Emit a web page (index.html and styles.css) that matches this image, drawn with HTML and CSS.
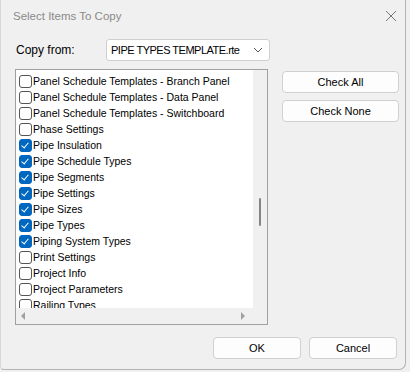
FILE: index.html
```html
<!DOCTYPE html>
<html>
<head>
<meta charset="utf-8">
<link rel="stylesheet" href="styles.css">
</head>
<body>
<div class="window">
  <div class="titlebar">
    <span class="title">Select Items To Copy</span>
    <svg class="close" width="12" height="12" viewBox="0 0 12 12"><path d="M1 1L11 11M11 1L1 11" stroke="#777" stroke-width="1"/></svg>
  </div>
  <div class="content">
    <div class="from-row">
      <span class="from-label">Copy from:</span>
      <div class="combo">
        <span>PIPE TYPES TEMPLATE.rte</span>
        <svg width="10" height="6" viewBox="0 0 10 6"><path d="M1 1L5 5L9 1" fill="none" stroke="#555" stroke-width="1"/></svg>
      </div>
    </div>
    <div class="main-row">
      <div class="listbox">
        <div class="items">
          <div class="item"><span class="cb"></span>Panel Schedule Templates - Branch Panel</div>
          <div class="item"><span class="cb"></span>Panel Schedule Templates - Data Panel</div>
          <div class="item"><span class="cb"></span>Panel Schedule Templates - Switchboard</div>
          <div class="item"><span class="cb"></span>Phase Settings</div>
          <div class="item"><span class="cb on"></span>Pipe Insulation</div>
          <div class="item"><span class="cb on"></span>Pipe Schedule Types</div>
          <div class="item"><span class="cb on"></span>Pipe Segments</div>
          <div class="item"><span class="cb on"></span>Pipe Settings</div>
          <div class="item"><span class="cb on"></span>Pipe Sizes</div>
          <div class="item"><span class="cb on"></span>Pipe Types</div>
          <div class="item"><span class="cb on"></span>Piping System Types</div>
          <div class="item"><span class="cb"></span>Print Settings</div>
          <div class="item"><span class="cb"></span>Project Info</div>
          <div class="item"><span class="cb"></span>Project Parameters</div>
          <div class="item"><span class="cb"></span>Railing Types</div>
        </div>
        <div class="vscroll"><div class="vthumb"></div></div>
        <div class="hscroll">
          <span class="arr left"></span>
          <span class="arr right"></span>
        </div>
        <div class="corner"></div>
      </div>
      <div class="side">
        <button class="btn">Check All</button>
        <button class="btn">Check None</button>
      </div>
    </div>
    <div class="bottom-row">
      <button class="btn small">OK</button>
      <button class="btn small">Cancel</button>
    </div>
  </div>
</div>
</body>
</html>
```
FILE: styles.css
```css
html, body {
  margin: 0;
  padding: 0;
  background: #f0f0f0;
}
body {
  font-family: "Liberation Sans", Arial, sans-serif;
  font-size: 12px;
  color: #000;
}
.window {
  width: 406px;
  height: 370px;
  box-sizing: border-box;
  background: #f0f0f0;
  border-right: 1px solid #b4b4b4;
  border-bottom: 1px solid #b4b4b4;
  border-left: 1px solid #d8d8d8;
  border-bottom-right-radius: 7px;
  border-bottom-left-radius: 4px;
  display: flex;
  flex-direction: column;
}
.titlebar {
  height: 31px;
  display: flex;
  align-items: center;
  justify-content: space-between;
  padding: 0 8px 0 12px;
}
.title {
  color: #8a8a8a;
  font-size: 11.5px;
}
.content {
  padding: 8px 0 0 14px;
  display: flex;
  flex-direction: column;
}
.from-row {
  display: flex;
  align-items: center;
  height: 22px;
}
.from-label {
  width: 90px;
  padding-left: 1px;
}
.combo {
  width: 164px;
  height: 22px;
  box-sizing: border-box;
  background: #fff;
  border: 1px solid #d0d0d0;
  border-radius: 3px;
  display: flex;
  align-items: center;
  justify-content: space-between;
  padding: 0 6px 0 4px;
  white-space: nowrap;
  font-size: 11px;
  letter-spacing: -0.5px;
}
.main-row {
  display: flex;
  gap: 14px;
  margin-top: 8px;
}
.listbox {
  width: 253px;
  height: 256px;
  box-sizing: border-box;
  border: 1px solid #a0a0a0;
  display: grid;
  grid-template-columns: 1fr 14px;
  grid-template-rows: 1fr 16px;
  background: #fff;
}
.items {
  overflow: hidden;
  padding-top: 3px;
  background: #fff;
}
.item {
  height: 16px;
  display: flex;
  align-items: center;
  white-space: nowrap;
  padding-left: 3px;
  font-size: 10.5px;
  color: #000;
}
.cb {
  width: 11px;
  height: 11px;
  border: 1px solid #555;
  border-radius: 3px;
  background: #fff;
  margin-right: 1px;
  flex: none;
  position: relative;
}
.cb.on {
  background: #0067c0;
  border-color: #0067c0;
}
.cb.on::after {
  content: "";
  position: absolute;
  left: 3px;
  top: 1px;
  width: 3px;
  height: 6px;
  border-right: 1px solid #fff;
  border-bottom: 1px solid #fff;
  transform: rotate(40deg);
}
.vscroll {
  background: #f0f0f0;
  position: relative;
}
.vthumb {
  position: absolute;
  left: 6px;
  top: 128px;
  width: 2px;
  height: 28px;
  background: #858585;
  border-radius: 1px;
}
.hscroll {
  background: #f0f0f0;
  display: flex;
  align-items: center;
  justify-content: space-between;
  padding: 0 8px 0 5px;
}
.corner {
  background: #f0f0f0;
}
.arr {
  width: 0;
  height: 0;
  border-top: 4px solid transparent;
  border-bottom: 4px solid transparent;
}
.arr.left {
  border-right: 4px solid #a0a0a0;
}
.arr.right {
  border-left: 4px solid #a0a0a0;
}
.side {
  display: flex;
  flex-direction: column;
  gap: 7px;
  padding-top: 2px;
}
.btn {
  width: 117px;
  height: 22px;
  box-sizing: border-box;
  background: #fdfdfd;
  border: 1px solid #d0d0d0;
  border-radius: 4px;
  font-family: "Liberation Sans", Arial, sans-serif;
  font-size: 11px;
  color: #000;
  padding: 0;
}
.btn.small {
  width: 88px;
}
.bottom-row {
  display: flex;
  justify-content: flex-end;
  gap: 8px;
  margin-top: 12px;
  padding-right: 8px;
}
```
